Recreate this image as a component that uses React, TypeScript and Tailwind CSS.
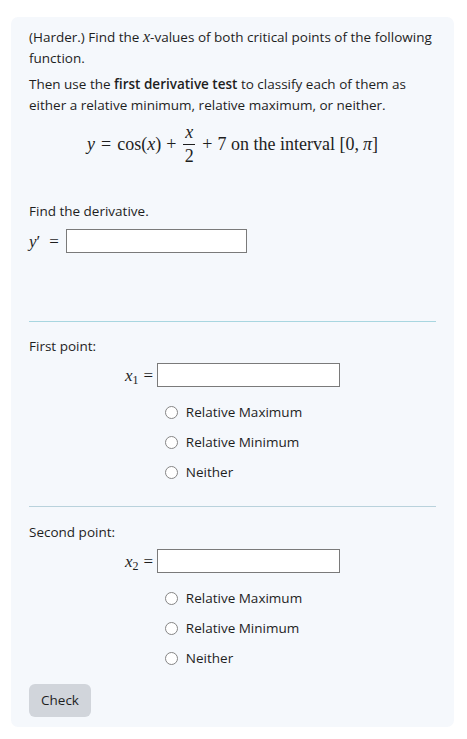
import React from "react";

const sans = { fontFamily: '"Open Sans", "Noto Sans", sans-serif' };

function V({ children }: { children: React.ReactNode }) {
  return <span className="italic">{children}</span>;
}

function Radio({ label }: { label: string }) {
  return (
    <label className="flex h-[21px] items-center">
      <span className="h-[13px] w-[13px] rounded-full border border-[#858585] bg-white" />
      <span className="ml-[8px]">{label}</span>
    </label>
  );
}

function Point({ title, sub }: { title: string; sub: string }) {
  return (
    <div>
      <p>{title}</p>
      <div className="mt-[6px] flex items-center justify-center">
        <span className="font-['Liberation_Serif',serif] text-[17px] leading-none">
          <V>x</V>
          <sub className="text-[12px] not-italic">{sub}</sub>
          <span className="ml-[5px] mr-[4px]">=</span>
        </span>
        <input className="h-[24px] w-[183px] border border-[#7a7a7a] bg-white outline-none" />
      </div>
      <div className="mt-[15px] flex justify-center">
        <div className="ml-[2px] flex w-fit flex-col gap-[9px]">
          <Radio label="Relative Maximum" />
          <Radio label="Relative Minimum" />
          <Radio label="Neither" />
        </div>
      </div>
    </div>
  );
}

export default function App() {
  return (
    <div className="min-h-screen bg-white pt-[17px]" style={sans}>
      <div className="mx-[11px] w-[443px] rounded-[7px] bg-[#f5f8fc] px-[18px] pb-[10px] pt-[9px] text-[13.5px] leading-[21px] text-[#1e1e1e]">
        <p>
          (Harder.) Find the{" "}
          <span className="font-['Liberation_Serif',serif] text-[16px] italic">x</span>-values of both critical
          points of the following function.
        </p>
        <p className="mt-[5px]">
          Then use the <b className="font-semibold">first derivative test</b> to classify each of them as either a
          relative minimum, relative maximum, or neither.
        </p>

        <div className="mt-[8px] flex h-[40px] items-center justify-center font-['Liberation_Serif',serif] text-[18px] leading-none">
          <V>y</V>
          <span className="mx-[6px]">=</span>
          <span>cos(</span>
          <V>x</V>
          <span>)</span>
          <span className="mx-[5px]">+</span>
          <span className="inline-flex flex-col items-center px-[2px]">
            <span className="pb-[3px] italic">x</span>
            <span className="h-px w-[12px] bg-[#1e1e1e]" />
            <span className="pt-[2px]">2</span>
          </span>
          <span className="mx-[5px]">+</span>
          <span>7 on the interval [0,</span>
          <span className="ml-[4px] italic">π</span>
          <span>]</span>
        </div>

        <p className="mt-[37px]">Find the derivative.</p>
        <div className="mt-[7px] flex items-center">
          <span className="font-['Liberation_Serif',serif] text-[17px] leading-none">
            <V>y</V>
            <span>′</span>
            <span className="ml-[9px] mr-[7px]">=</span>
          </span>
          <input className="h-[24px] w-[181px] border border-[#7a7a7a] bg-white outline-none" />
        </div>

        <div className="mt-[68px] h-px bg-[#a8d6e0]" />

        <div className="mt-[14px]">
          <Point title="First point:" sub="1" />
        </div>

        <div className="mt-[23px] h-px bg-[#b9d2dc]" />

        <div className="mt-[15px]">
          <Point title="Second point:" sub="2" />
        </div>

        <button className="mt-[15px] h-[33px] w-[62px] rounded-[6px] bg-[#d1d5db] text-[13.5px] text-[#1e1e1e]">
          Check
        </button>
      </div>
    </div>
  );
}
